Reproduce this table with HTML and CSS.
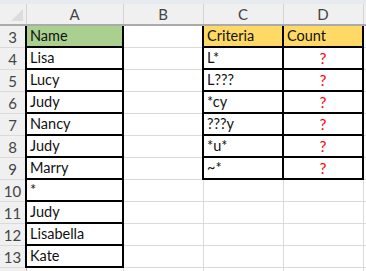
FILE: index.html
```html
<!DOCTYPE html>
<html lang="en">
<head>
    <meta charset="UTF-8">
    <title>Sheet1</title>
    <link rel="stylesheet" href="styles.css">
</head>
<body>
    <div class="ribbon-edge"></div>
    <table class="sheet">
        <colgroup>
            <col class="col-num">
            <col class="col-a">
            <col class="col-b">
            <col class="col-c">
            <col class="col-d">
            <col class="col-rest">
        </colgroup>
        <thead>
            <tr>
                <th class="corner"><span class="corner-mark"></span></th>
                <th>A</th>
                <th>B</th>
                <th>C</th>
                <th>D</th>
                <th class="rest"></th>
            </tr>
        </thead>
        <tbody>
            <tr>
                <td class="num">3</td>
                <td class="box fill-green">Name</td>
                <td></td>
                <td class="box fill-gold">Criteria</td>
                <td class="box fill-gold">Count</td>
                <td class="rest"></td>
            </tr>
            <tr>
                <td class="num">4</td>
                <td class="box">Lisa</td>
                <td></td>
                <td class="box">L*</td>
                <td class="box result">?</td>
                <td class="rest"></td>
            </tr>
            <tr>
                <td class="num">5</td>
                <td class="box">Lucy</td>
                <td></td>
                <td class="box">L???</td>
                <td class="box result">?</td>
                <td class="rest"></td>
            </tr>
            <tr>
                <td class="num">6</td>
                <td class="box">Judy</td>
                <td></td>
                <td class="box">*cy</td>
                <td class="box result">?</td>
                <td class="rest"></td>
            </tr>
            <tr>
                <td class="num">7</td>
                <td class="box">Nancy</td>
                <td></td>
                <td class="box">???y</td>
                <td class="box result">?</td>
                <td class="rest"></td>
            </tr>
            <tr>
                <td class="num">8</td>
                <td class="box">Judy</td>
                <td></td>
                <td class="box">*u*</td>
                <td class="box result">?</td>
                <td class="rest"></td>
            </tr>
            <tr>
                <td class="num">9</td>
                <td class="box">Marry</td>
                <td></td>
                <td class="box">~*</td>
                <td class="box result">?</td>
                <td class="rest"></td>
            </tr>
            <tr>
                <td class="num">10</td>
                <td class="box">*</td>
                <td></td>
                <td></td>
                <td></td>
                <td class="rest"></td>
            </tr>
            <tr>
                <td class="num">11</td>
                <td class="box">Judy</td>
                <td></td>
                <td></td>
                <td></td>
                <td class="rest"></td>
            </tr>
            <tr>
                <td class="num">12</td>
                <td class="box">Lisabella</td>
                <td></td>
                <td></td>
                <td></td>
                <td class="rest"></td>
            </tr>
            <tr>
                <td class="num">13</td>
                <td class="box">Kate</td>
                <td></td>
                <td></td>
                <td></td>
                <td class="rest"></td>
            </tr>
            <tr>
                <td class="num"></td>
                <td></td>
                <td></td>
                <td></td>
                <td></td>
                <td class="rest"></td>
            </tr>
        </tbody>
    </table>
</body>
</html>
```

FILE: styles.css
```css
body {
    margin: 0;
    background-color: #ffffff;
    font-family: Lato, "Open Sans", sans-serif;
    overflow: hidden;
}

.ribbon-edge {
    height: 4px;
    background-color: #e7ebef;
}

.sheet {
    border-collapse: collapse;
    table-layout: fixed;
    width: 370px;
}

.col-num { width: 26px; }
.col-a { width: 97px; }
.col-b { width: 80px; }
.col-c { width: 80px; }
.col-d { width: 80px; }
.col-rest { width: 7px; }

/* column letters */
.sheet th {
    height: 20px;
    padding: 0;
    background-color: #f0f0f0;
    border: 1px solid #d4d4d4;
    border-top: none;
    border-bottom: 2px solid #ababab;
    color: #444444;
    font-weight: normal;
    font-size: 15px;
    text-align: center;
}

.sheet th.corner {
    position: relative;
    border-left: none;
}

.corner-mark {
    position: absolute;
    right: 3px;
    bottom: 3px;
    width: 0;
    height: 0;
    border-left: 12px solid transparent;
    border-bottom: 12px solid #dcdcdc;
}

.sheet td {
    height: 20px;
    padding: 0 3px;
    border: 1px solid #dadada;
    font-size: 14.5px;
    color: #111111;
    white-space: nowrap;
    overflow: hidden;
    vertical-align: bottom;
    line-height: 20px;
}

.sheet .rest {
    border-right: none;
}

/* row numbers */
.sheet td.num {
    padding: 0;
    background-color: #f0f0f0;
    border-left: none;
    border-right: 1px solid #b8b8b8;
    color: #444444;
    font-size: 15px;
    text-align: center;
}

/* cells with all borders applied */
.sheet td.box {
    border: 2px solid #000000;
}

.fill-green {
    background-color: #a9d08e;
}

.fill-gold {
    background-color: #ffd966;
}

.sheet td.result {
    color: #ff0000;
    font-size: 15.5px;
    text-align: center;
}
```
